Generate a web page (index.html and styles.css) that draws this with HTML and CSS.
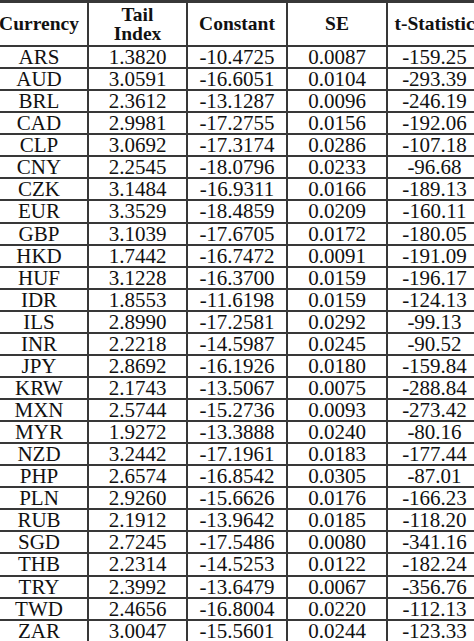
FILE: index.html
```html
<!DOCTYPE html>
<html>
<head>
<meta charset="utf-8">
<link rel="stylesheet" href="styles.css">
</head>
<body>
<table class="data">
<colgroup>
<col class="c1"><col class="c2"><col class="c3"><col class="c4"><col class="c5">
</colgroup>
<thead>
<tr><th>Currency</th><th>Tail<br>Index</th><th>Constant</th><th>SE</th><th>t-Statistic</th></tr>
</thead>
<tbody>
<tr><td>ARS</td><td>1.3820</td><td>-10.4725</td><td>0.0087</td><td>-159.25</td></tr>
<tr><td>AUD</td><td>3.0591</td><td>-16.6051</td><td>0.0104</td><td>-293.39</td></tr>
<tr><td>BRL</td><td>2.3612</td><td>-13.1287</td><td>0.0096</td><td>-246.19</td></tr>
<tr><td>CAD</td><td>2.9981</td><td>-17.2755</td><td>0.0156</td><td>-192.06</td></tr>
<tr><td>CLP</td><td>3.0692</td><td>-17.3174</td><td>0.0286</td><td>-107.18</td></tr>
<tr><td>CNY</td><td>2.2545</td><td>-18.0796</td><td>0.0233</td><td>-96.68</td></tr>
<tr><td>CZK</td><td>3.1484</td><td>-16.9311</td><td>0.0166</td><td>-189.13</td></tr>
<tr><td>EUR</td><td>3.3529</td><td>-18.4859</td><td>0.0209</td><td>-160.11</td></tr>
<tr><td>GBP</td><td>3.1039</td><td>-17.6705</td><td>0.0172</td><td>-180.05</td></tr>
<tr><td>HKD</td><td>1.7442</td><td>-16.7472</td><td>0.0091</td><td>-191.09</td></tr>
<tr><td>HUF</td><td>3.1228</td><td>-16.3700</td><td>0.0159</td><td>-196.17</td></tr>
<tr><td>IDR</td><td>1.8553</td><td>-11.6198</td><td>0.0159</td><td>-124.13</td></tr>
<tr><td>ILS</td><td>2.8990</td><td>-17.2581</td><td>0.0292</td><td>-99.13</td></tr>
<tr><td>INR</td><td>2.2218</td><td>-14.5987</td><td>0.0245</td><td>-90.52</td></tr>
<tr><td>JPY</td><td>2.8692</td><td>-16.1926</td><td>0.0180</td><td>-159.84</td></tr>
<tr><td>KRW</td><td>2.1743</td><td>-13.5067</td><td>0.0075</td><td>-288.84</td></tr>
<tr><td>MXN</td><td>2.5744</td><td>-15.2736</td><td>0.0093</td><td>-273.42</td></tr>
<tr><td>MYR</td><td>1.9272</td><td>-13.3888</td><td>0.0240</td><td>-80.16</td></tr>
<tr><td>NZD</td><td>3.2442</td><td>-17.1961</td><td>0.0183</td><td>-177.44</td></tr>
<tr><td>PHP</td><td>2.6574</td><td>-16.8542</td><td>0.0305</td><td>-87.01</td></tr>
<tr><td>PLN</td><td>2.9260</td><td>-15.6626</td><td>0.0176</td><td>-166.23</td></tr>
<tr><td>RUB</td><td>2.1912</td><td>-13.9642</td><td>0.0185</td><td>-118.20</td></tr>
<tr><td>SGD</td><td>2.7245</td><td>-17.5486</td><td>0.0080</td><td>-341.16</td></tr>
<tr><td>THB</td><td>2.2314</td><td>-14.5253</td><td>0.0122</td><td>-182.24</td></tr>
<tr><td>TRY</td><td>2.3992</td><td>-13.6479</td><td>0.0067</td><td>-356.76</td></tr>
<tr><td>TWD</td><td>2.4656</td><td>-16.8004</td><td>0.0220</td><td>-112.13</td></tr>
<tr><td>ZAR</td><td>3.0047</td><td>-15.5601</td><td>0.0244</td><td>-123.33</td></tr>
</tbody>
</table>
</body>
</html>
```
FILE: styles.css
```css
html, body {
  margin: 0;
  padding: 0;
  background: #ffffff;
  overflow: hidden;
}
.data {
  margin-left: -11px;
  border-collapse: collapse;
  table-layout: fixed;
  width: 492px;
  font-family: "Liberation Serif", "Times New Roman", serif;
  color: #111111;
}
.c1 { width: 98px; }
.c2 { width: 99px; }
.c3 { width: 100px; }
.c4 { width: 100px; }
.c5 { width: 95px; }
.data th, .data td {
  border: 2px solid #383838;
  padding: 0;
  text-align: center;
  vertical-align: middle;
}
.data th {
  height: 42px;
  font-size: 19.5px;
  font-weight: bold;
  line-height: 19.5px;
}
.data thead th {
  border-top-width: 3px;
}
.data td {
  height: 19.07px;
  font-size: 21px;
  line-height: 19px;
  padding-top: 1px;
}
```
